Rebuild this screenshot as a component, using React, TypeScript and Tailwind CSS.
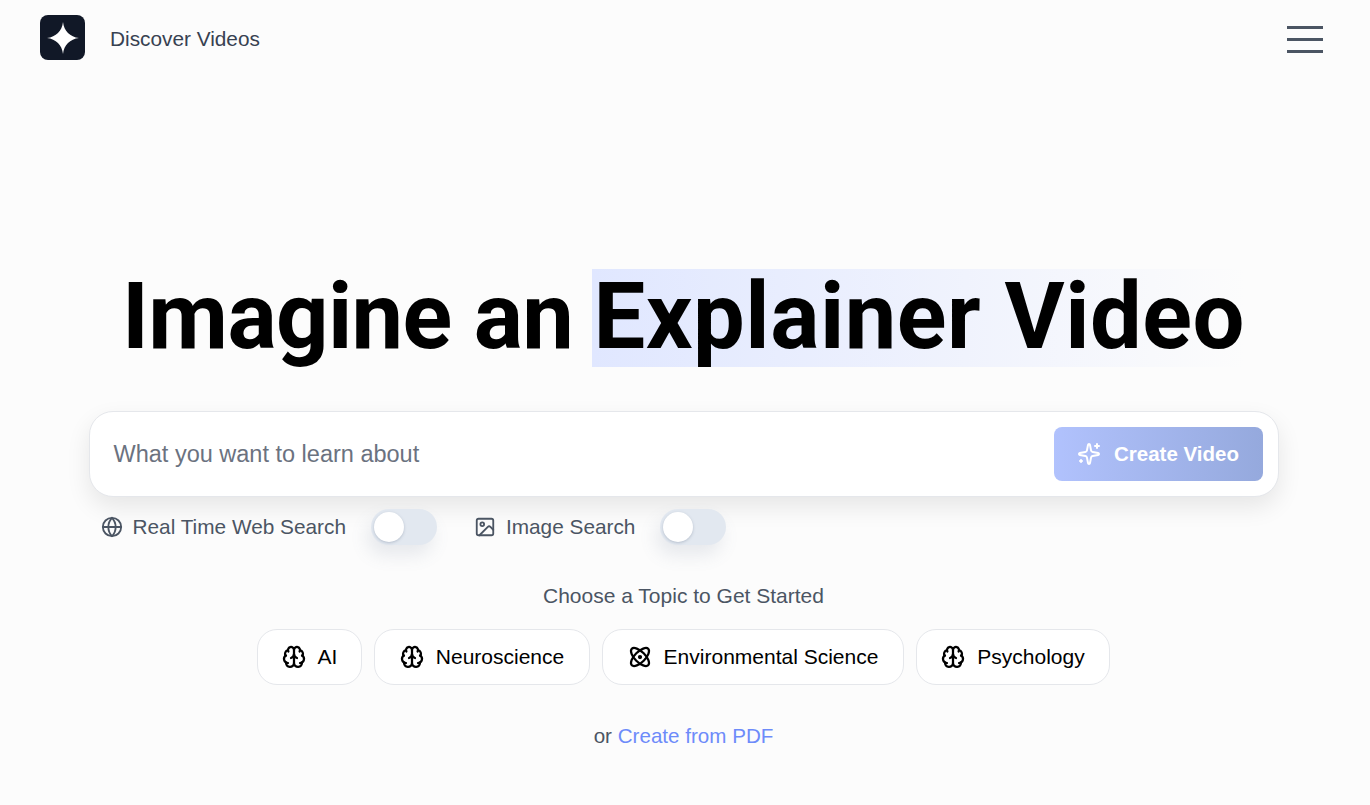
import { Atom, Brain, Globe, Image } from 'lucide-react';

const topics = [
  { label: 'AI', icon: Brain, width: 'w-[105px]' },
  { label: 'Neuroscience', icon: Brain, width: 'w-[216px]' },
  { label: 'Environmental Science', icon: Atom, width: 'w-[302px]' },
  { label: 'Psychology', icon: Brain, width: 'w-[194px]' },
];

function Toggle() {
  return (
    <div className="flex h-9 w-[66px] items-center rounded-full bg-[#e2e8f0] pl-[3px] shadow-[-4px_10px_18px_rgba(100,116,139,0.14)]">
      <div className="size-[30px] rounded-full bg-white shadow-[0_1px_3px_rgba(100,116,139,0.35)]" />
    </div>
  );
}

function SparkIcon() {
  return (
    <svg viewBox="0 0 24 24" className="size-6" fill="none" stroke="currentColor" strokeWidth={2} strokeLinecap="round" strokeLinejoin="round">
      <path d="M11.017 2.814a1 1 0 0 1 1.966 0l1.051 5.558a2 2 0 0 0 1.594 1.594l5.558 1.051a1 1 0 0 1 0 1.966l-5.558 1.051a2 2 0 0 0-1.594 1.594l-1.051 5.558a1 1 0 0 1-1.966 0l-1.051-5.558a2 2 0 0 0-1.594-1.594l-5.558-1.051a1 1 0 0 1 0-1.966l5.558-1.051a2 2 0 0 0 1.594-1.594z" />
      <path d="M20 2v4" />
      <path d="M22 4h-4" />
      <path d="M4 18v2" />
      <path d="M5 19H3" />
    </svg>
  );
}

function App() {
  return (
    <div className="h-[805px] overflow-hidden bg-[#fcfcfc] font-['Liberation_Sans',sans-serif]">
      <header className="flex h-[78px] items-center justify-between pl-10 pr-[47px]">
        <div className="flex items-center gap-[25px]">
          <div className="mb-[3px] flex size-[45px] items-center justify-center rounded-lg bg-[#111827]">
            <svg viewBox="0 0 32 32" className="size-8" fill="white">
              <path d="M16 0C17 9 23 15 32 16C23 17 17 23 16 32C15 23 9 17 0 16C9 15 15 9 16 0Z" />
            </svg>
          </div>
          <span className="text-[20.8px] text-[#374151]">Discover Videos</span>
        </div>
        <div className="flex w-9 flex-col gap-[9px]">
          <div className="h-[3px] bg-[#4b5563]" />
          <div className="h-[3px] bg-[#4b5563]" />
          <div className="h-[3px] bg-[#4b5563]" />
        </div>
      </header>

      <main className="flex flex-col items-center pt-[191px] pr-[3px]">
        <h1 className="flex font-['Roboto',sans-serif] text-[92px] font-bold leading-none text-black">
          <span className="flex h-[98px] items-center whitespace-pre pb-[3px] tracking-[-0.65px]">Imagine an </span>
          <span className="-ml-[3px] flex h-[98px] items-center bg-linear-to-r from-[#e0e7ff] to-transparent pb-[3px] pl-px tracking-[0.5px]">Explainer Video</span>
        </h1>

        <div className="mt-[44px] flex h-[86px] w-[1190px] items-center justify-between rounded-3xl border border-[#e5e7eb] bg-white pl-6 pr-[15px] shadow-[0_10px_25px_rgba(0,0,0,0.09)]">
          <span className="pt-[1px] text-[23.5px] text-[#6b7280]">What you want to learn about</span>
          <button className="flex h-[54px] w-[209px] items-center justify-center gap-[13px] rounded-lg bg-linear-to-r from-[#b1c2fd] to-[#95a9dd] text-[20.5px] font-bold text-white">
            <SparkIcon />
            <span>Create Video</span>
          </button>
        </div>

        <div className="mt-[12px] flex w-[1190px] items-center pl-3">
          <Globe size={22} strokeWidth={2} className="text-[#4b5563]" />
          <span className="ml-[10px] text-[20.8px] text-[#4b5563]">Real Time Web Search</span>
          <div className="ml-[25px]"><Toggle /></div>
          <Image size={22} strokeWidth={2} className="ml-[37px] text-[#4b5563]" />
          <span className="ml-[10px] text-[20.8px] text-[#4b5563]">Image Search</span>
          <div className="ml-[25px]"><Toggle /></div>
        </div>

        <p className="mt-[37px] text-[21px] leading-7 text-[#4b5563]">Choose a Topic to Get Started</p>

        <div className="mt-[19px] flex gap-3">
          {topics.map((topic) => (
            <div
              key={topic.label}
              className={`flex h-14 items-center justify-center gap-3 rounded-[20px] border border-[#e5e7eb] bg-white text-[21px] text-black ${topic.width}`}
            >
              <topic.icon size={24} strokeWidth={2.25} />
              {topic.label}
            </div>
          ))}
        </div>

        <p className="mt-[37px] text-[20.6px] leading-7 text-[#4b5563]">
          or <span className="text-[#6d8bfa]">Create from PDF</span>
        </p>
      </main>
    </div>
  );
}

export default App;
